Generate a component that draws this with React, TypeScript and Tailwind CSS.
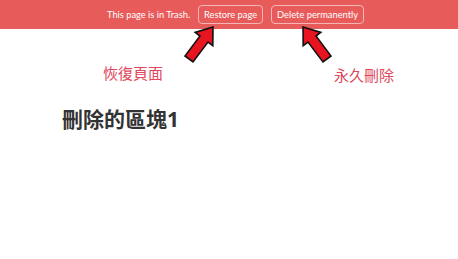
const Arrow = ({ flip }: { flip?: boolean }) => (
  <svg width="38" height="38" viewBox="0 0 38 38" style={flip ? { transform: "scaleX(-1)" } : undefined}>
    <path
      d="M33 1 L32.8 19.6 L28 16 L13 36 L5 30 L20 10 L15.2 6.4 Z"
      fill="#e8141f"
      stroke="#111"
      strokeWidth="1.6"
      strokeLinejoin="miter"
    />
  </svg>
);

export default function App() {
  return (
    <div className="relative w-[458px] h-[259px] bg-white overflow-hidden" style={{ fontFamily: '"Open Sans", "Noto Sans CJK TC", sans-serif' }}>
      <div
        className="h-[29px] bg-[#e85b5b] flex items-center pl-[107px] gap-2 text-white text-[9.3px]"
        style={{ fontFamily: 'Lato, "Noto Sans", sans-serif' }}
      >
        <span>This page is in Trash.</span>
        <button className="h-[19px] px-[5px] border border-[#f4b6b6] rounded-sm leading-none">Restore page</button>
        <button className="h-[19px] px-[5px] border border-[#f4b6b6] rounded-sm leading-none">Delete permanently</button>
      </div>

      <div className="absolute left-[180px] top-[26px]">
        <Arrow />
      </div>
      <div className="absolute left-[298px] top-[26px]">
        <Arrow flip />
      </div>

      <div className="flex justify-between pl-[103px] pr-[64px] pt-[33px] text-[#e0475a] text-[15px]">
        <span>恢復頁面</span>
        <span className="pt-[2px]">永久刪除</span>
      </div>

      <h1 className="pl-[62px] pt-[17px] text-[21px] font-bold text-[#333]">刪除的區塊1</h1>
    </div>
  );
}
